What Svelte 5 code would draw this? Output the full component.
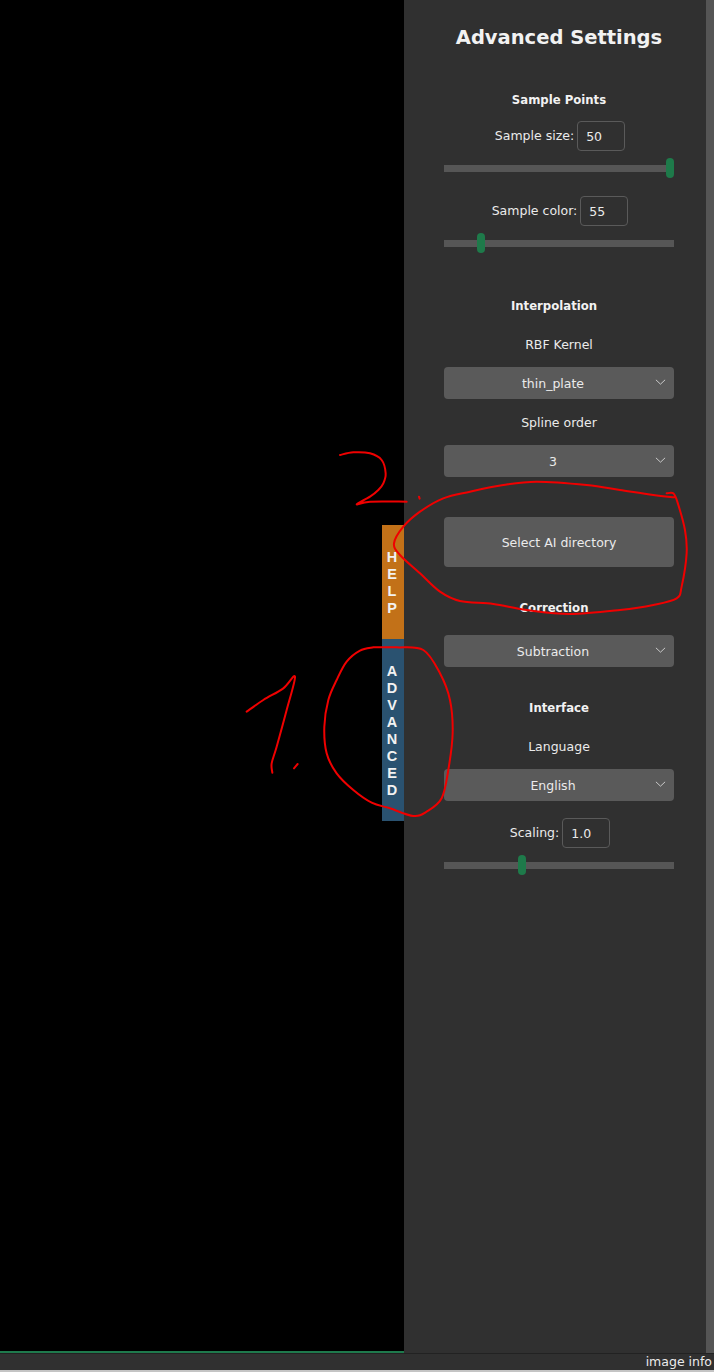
<script>
  const smooth = (pts) => {
    let d = `M${pts[0][0]} ${pts[0][1]}`;
    for (let i = 0; i < pts.length - 1; i++) {
      const p0 = pts[Math.max(i - 1, 0)], p1 = pts[i], p2 = pts[i + 1], p3 = pts[Math.min(i + 2, pts.length - 1)];
      const c1 = [p1[0] + (p2[0] - p0[0]) / 6, p1[1] + (p2[1] - p0[1]) / 6];
      const c2 = [p2[0] - (p3[0] - p1[0]) / 6, p2[1] - (p3[1] - p1[1]) / 6];
      d += ` C${c1[0]} ${c1[1]} ${c2[0]} ${c2[1]} ${p2[0]} ${p2[1]}`;
    }
    return d;
  };
  const zoneA = [
    [[60,45],[100,37],[150,40],[185,60],[197,100],[190,130],[175,150],[150,170],[110,193],[150,185],[260,185]],
    [[297,170],[299,176]],
    [[1062,172],[1000,165],[900,150],[800,135],[650,125],[550,135],[450,155],[370,175],[300,215],[250,260],[222,310],[240,345],[300,400],[360,455],[420,483],[520,492],[620,510],[750,522],[900,510],[1000,495],[1070,475],[1085,440],[1100,340],[1095,270],[1072,185],[1060,160],[1040,160]]
  ].map(smooth);
  const zoneB = [
    [[50,245],[100,210],[160,175],[195,140],[170,240],[140,350],[125,400],[127,428]],
    [[192,415],[203,402]],
    [[430,52],[390,62],[350,95],[320,150],[295,210],[283,290],[290,370],[320,430],[370,480],[425,518],[480,535],[550,558],[590,545],[635,505],[655,420],[668,310],[660,210],[630,130],[580,60],[500,52],[430,52]]
  ].map(smooth);
</script>

{#snippet slider(pos)}
  <div class="slider"><span class="thumb" style="left:{pos}px"></span></div>
{/snippet}

{#snippet select(label)}
  <div class="select">
    <span>{label}</span>
    <svg class="chev" viewBox="0 0 12 7" width="11" height="6" preserveAspectRatio="none"><path d="M1 1l5 5 5-5" fill="none" stroke="#d8d8d8" stroke-width="1"/></svg>
  </div>
{/snippet}

{#snippet tab(word, cls)}
  <div class="tab {cls}">
    {#each word as ch}<span>{ch}</span>{/each}
  </div>
{/snippet}

<div class="app">
  <div class="main">
    <div class="viewer">
      {@render tab('HELP', 'help')}
      {@render tab('ADVANCED', 'advanced')}
    </div>
    <aside class="panel">
      <h1>Advanced Settings</h1>

      <h2 class="first">Sample Points</h2>
      <div class="field"><label for="size">Sample size:</label><input id="size" value="50" /></div>
      {@render slider(222)}
      <div class="field second"><label for="color">Sample color:</label><input id="color" value="55" /></div>
      {@render slider(33)}

      <h2 class="interp">Interpolation</h2>
      <p class="cap">RBF Kernel</p>
      {@render select('thin_plate')}
      <p class="cap">Spline order</p>
      {@render select('3')}
      <button class="dir">Select AI directory</button>

      <h2 class="corr">Correction</h2>
      {@render select('Subtraction')}

      <h2 class="iface">Interface</h2>
      <p class="cap lang">Language</p>
      {@render select('English')}
      <div class="field scaling"><label for="scale">Scaling:</label><input id="scale" value="1.0" /></div>
      {@render slider(74)}
    </aside>
    <div class="scrollbar"></div>
  </div>
  <footer class="status"><span>image info</span></footer>

  <svg class="ink" viewBox="0 0 714 1372" width="714" height="1372">
    <g transform="translate(320 440) scale(.3333)">
      {#each zoneA as d}<path {d} />{/each}
    </g>
    <g transform="translate(230 630) scale(.3333)">
      {#each zoneB as d}<path {d} />{/each}
    </g>
  </svg>
</div>

<style>
  :global(body) { margin: 0; background: #000; }
  .app {
    position: relative;
    width: 714px;
    height: 1372px;
    display: flex;
    flex-direction: column;
    overflow: hidden;
    font-family: "DejaVu Sans", sans-serif;
    color: #ebebeb;
    font-size: 12.5px;
  }
  .main { display: flex; height: 1354px; border-bottom: 1px solid #222; box-sizing: border-box; flex: none; }
  .viewer {
    width: 404px;
    background: #000;
    box-sizing: border-box;
    padding-top: 525px;
    display: flex;
    flex-direction: column;
    align-items: flex-end;
    border-bottom: 2px solid #1f7a4d;
  }
  .tab {
    width: 22px;
    box-sizing: border-box;
    padding: 24px 2px 22px 0;
    display: flex;
    flex-direction: column;
    align-items: center;
    font: bold 14.5px/17px "Liberation Sans", sans-serif;
    color: #f2f2f2;
  }
  .help { background: #c27118; }
  .advanced { background: #2a5270; }
  .panel {
    width: 302px;
    background: #303030;
    box-sizing: border-box;
    padding: 0 32px 0 40px;
    display: flex;
    flex-direction: column;
    text-align: center;
  }
  h1 { margin: 26px 0 0; font-size: 19.5px; line-height: 24px; font-weight: 700; color: #f2f2f2; }
  h2 { margin: 0; font-size: 11.7px; line-height: 16px; font-weight: 700; color: #f2f2f2; }
  .first { margin-top: 42px; }
  .interp { margin-top: 51px; padding-right: 10px; }
  .corr { margin-top: 33px; padding-right: 10px; }
  .iface { margin-top: 33px; }
  .cap { margin: 15px 0 0; line-height: 16px; height: 16px; }
  .interp + .cap { margin-top: 23px; }
  .cap + .select { margin-top: 14px; }
  .select + .cap { margin-top: 16px; }
  .cap.lang { margin-top: 23px; }
  .field { display: flex; justify-content: center; align-items: center; gap: 3px; margin-top: 13px; height: 30px; padding-left: 2px; }
  .field.second { margin-top: 24px; }
  .field.scaling { margin-top: 17px; }
  label { line-height: 16px; }
  input {
    width: 48px;
    height: 30px;
    box-sizing: border-box;
    background: #303030;
    border: 1px solid #5a5a5a;
    border-radius: 4px;
    color: #ebebeb;
    font: 12.5px "DejaVu Sans", sans-serif;
    padding: 0 8px;
    outline: none;
  }
  .slider {
    position: relative;
    height: 7.5px;
    background: #565656;
    margin-top: 13.5px;
  }
  .thumb {
    position: absolute;
    top: -6.5px;
    width: 8px;
    height: 20px;
    border-radius: 4px;
    background: #1e7a4a;
  }
  .select {
    position: relative;
    height: 32px;
    background: #5a5a5a;
    border-radius: 4px;
    display: flex;
    align-items: center;
    justify-content: center;
    padding-right: 12px;
    flex: none;
  }
  .chev { position: absolute; right: 8.5px; top: 12px; }
  .corr + .select { margin-top: 19px; }
  .dir {
    margin-top: 40px;
    height: 50px;
    border: 0;
    border-radius: 4px;
    background: #5a5a5a;
    color: #ebebeb;
    font: 12.5px "DejaVu Sans", sans-serif;
    flex: none;
  }
  .scrollbar { width: 8px; background: #555; }
  .status {
    flex: 1;
    background: #303030;
    border-bottom: 2px solid #c4c4c4;
    display: flex;
    justify-content: flex-end;
    align-items: center;
    padding-right: 2px;
    line-height: 16px;
  }
  .ink { position: absolute; inset: 0; pointer-events: none; }
  .ink path { fill: none; stroke: #f00000; stroke-width: 6; stroke-linecap: round; stroke-linejoin: round; }
</style>
